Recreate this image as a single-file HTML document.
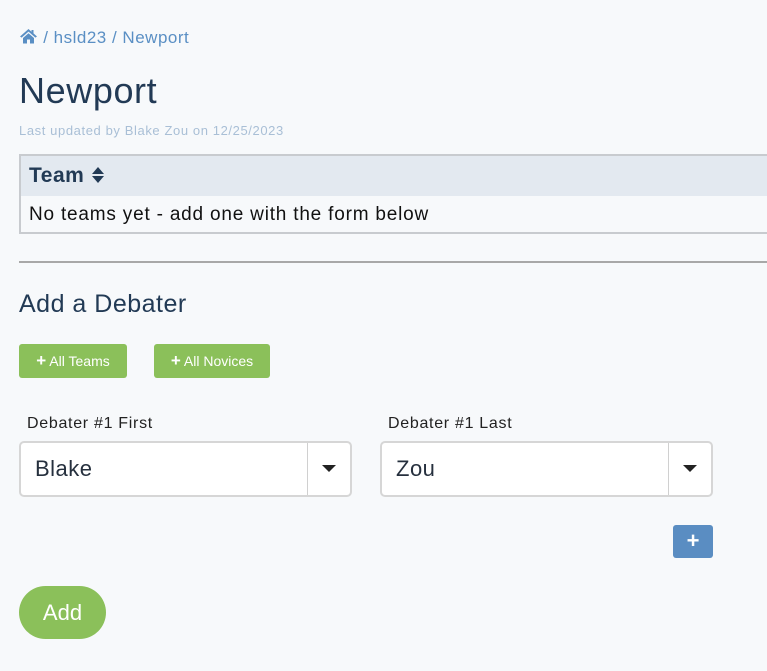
<!DOCTYPE html>
<html><head><meta charset="utf-8"><style>
*{box-sizing:border-box;margin:0;padding:0}
body{width:767px;height:671px;overflow:hidden;background:#f7f9fb;font-family:"Liberation Sans",sans-serif;position:relative;color:#1f2d3d}
.a{position:absolute;white-space:nowrap}
.crumb{left:19px;top:28px;font-size:17px;letter-spacing:0.5px;color:#5a8fc4}
h1{position:absolute;left:19px;top:70px;font-size:36px;letter-spacing:0.6px;font-weight:normal;color:#223a55}
.upd{left:19px;top:123px;font-size:13px;letter-spacing:0.6px;color:#a9bfd6}
.tbl{position:absolute;left:19px;top:154px;width:760px;height:80px;border:2px solid #c8cbcf;border-right:none;background:#f7f9fb}
.th{height:40px;background:#e3e9f0;padding-left:8px;font-size:21px;letter-spacing:0.5px;font-weight:bold;color:#223a55;line-height:40px}
.td{padding-left:8px;font-size:19px;letter-spacing:0.8px;line-height:38px;color:#111}
.hr{position:absolute;left:19px;top:261px;width:760px;height:2px;background:#a8a8a8}
h2{position:absolute;left:19px;top:290px;font-size:25px;letter-spacing:0.5px;font-weight:normal;color:#223a55}
.gb{position:absolute;top:344px;height:34px;background:#8bc05a;border-radius:3px;color:#fff;font-size:14px;line-height:34px;text-align:center}
.lbl{top:415px;font-size:16px;letter-spacing:0.7px;color:#222}
.sel{position:absolute;top:441px;width:333px;height:56px;background:#fff;border:2px solid #d6d6d6;border-radius:5px}
.sel span{position:absolute;left:14px;top:13px;font-size:22px;letter-spacing:0.5px;color:#26303e}
.sel i{position:absolute;right:0;top:0;width:43px;height:52px;border-left:1px solid #d0d0d0}
.sel i:after{content:"";position:absolute;left:14px;top:22px;border:7px solid transparent;border-top:7px solid #222;border-bottom:none}
.plus{position:absolute;left:673px;top:525px;width:40px;height:33px;background:#5a8dc2;border-radius:3px;color:#fff;font-size:22px;font-weight:bold;text-align:center;line-height:32px}
.add{position:absolute;left:19px;top:586px;width:87px;height:53px;background:#8bc05a;border-radius:27px;color:#fff;font-size:22px;text-align:center;line-height:53px}
</style></head><body>
<div class="a crumb"><svg width="19" height="16" viewBox="0 0 19 16" style="vertical-align:-1px"><path d="M9.5 1 L1 8.5 L2.6 9.6 L9.5 3.6 L16.4 9.6 L18 8.5 L14.5 5.4 V2 H12.5 V3.7 Z M4 10 L9.5 5.3 L15 10 V15.5 H11 V11.5 H8 V15.5 H4 Z" fill="#5a8fc4"/></svg> / hsld23 / Newport</div>
<h1>Newport</h1>
<div class="a upd">Last updated by Blake Zou on 12/25/2023</div>
<div class="tbl"><div class="th">Team <svg width="14" height="18" viewBox="0 0 14 18" style="vertical-align:-2px"><path d="M7 1 L13 8 H1 Z M1 10 H13 L7 17 Z" fill="#223a55"/></svg></div><div class="td">No teams yet - add one with the form below</div></div>
<div class="hr"></div>
<h2>Add a Debater</h2>
<div class="gb" style="left:19px;width:108px"><b style="font-size:17px">+</b> All Teams</div>
<div class="gb" style="left:154px;width:116px"><b style="font-size:17px">+</b> All Novices</div>
<div class="a lbl" style="left:27px">Debater #1 First</div>
<div class="a lbl" style="left:388px">Debater #1 Last</div>
<div class="sel" style="left:19px"><span>Blake</span><i></i></div>
<div class="sel" style="left:380px"><span>Zou</span><i></i></div>
<div class="plus">+</div>
<div class="add">Add</div>
</body></html>
